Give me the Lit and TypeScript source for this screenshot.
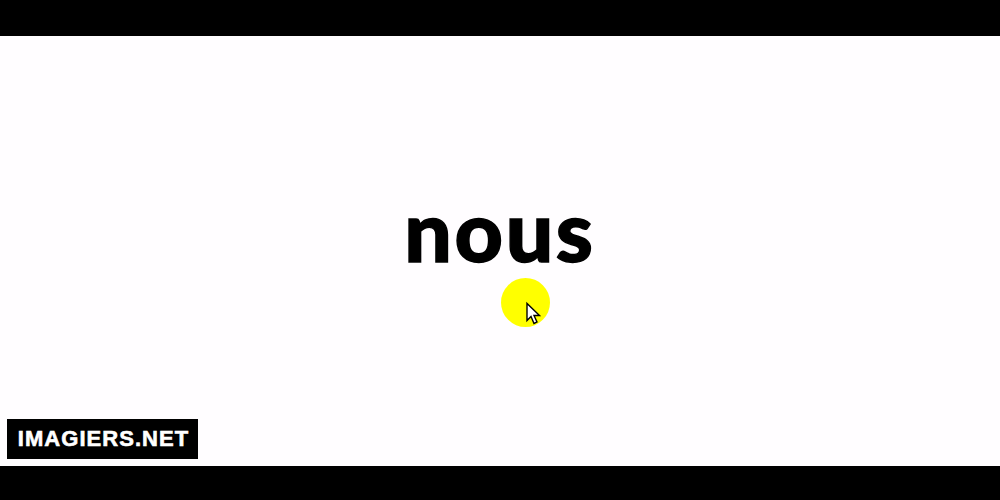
import { LitElement, html, css } from "lit";
import { customElement } from "lit/decorators.js";

@customElement("app-root")
export class AppRoot extends LitElement {
  static styles = css`
    :host { display: block; width: 1000px; height: 500px; overflow: hidden; }
    .page { width: 1000px; height: 500px; display: flex; flex-direction: column; background: #fffdff; }
    .bar { background: #000; flex: none; }
    .top { height: 36px; }
    .bottom { height: 34px; }
    .stage { flex: 1; position: relative; display: flex; justify-content: center; }
    .word { margin-top: 144px; height: 100px; font: 900 84px/100px "Lato", sans-serif; color: #000; letter-spacing: 2.6px; -webkit-text-stroke: 1.4px #000; }
    .cursor { position: absolute; left: 501px; top: 241.5px; width: 49px; height: 49px; }
    .logo { position: absolute; left: 7px; bottom: 7px; width: 191px; height: 40px; box-sizing: border-box; padding-left: 2px; background: #000; color: #fff;
      font: 700 22px/40px "Liberation Sans", sans-serif; letter-spacing: 1.05px; -webkit-text-stroke: 0.6px #fff; text-align: center; }
  `;
  render() {
    return html`<div class="page">
      <div class="bar top"></div>
      <div class="stage">
        <div class="word">nous</div>
        <svg class="cursor" viewBox="0 0 49 49">
          <circle cx="24.5" cy="24.5" r="24.5" fill="#ffff00"></circle>
          <path d="M26 25.5V42.5L30 38.5L33 45.5L36 44L33 37.5H38.5Z" fill="#fff" stroke="#000" stroke-width="1.4"></path>
        </svg>
        <div class="logo">IMAGIERS.NET</div>
      </div>
      <div class="bar bottom"></div>
    </div>`;
  }
}
